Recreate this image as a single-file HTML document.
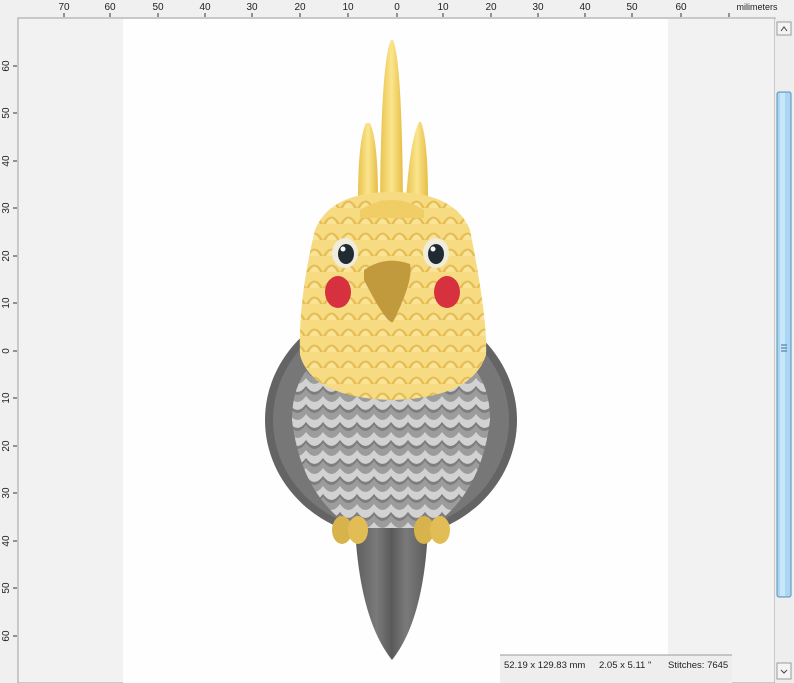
<!DOCTYPE html>
<html><head><meta charset="utf-8"><style>
html,body{margin:0;padding:0;background:#f0f0f0;}
svg{display:block;font-family:"Liberation Sans",sans-serif;}
</style></head><body>
<svg width="794" height="683" viewBox="0 0 794 683" xmlns="http://www.w3.org/2000/svg">
<defs>
<pattern id="ys" width="17" height="16" patternUnits="userSpaceOnUse">
<rect width="17" height="16" fill="#f6db83"/>
<path d="M0 16 Q8.5 1 17 16 Z" fill="#e6bd52"/>
<path d="M3 16 Q8.5 5 14 16 Z" fill="#f9e396"/>
</pattern>
<pattern id="gs" width="17" height="18" patternUnits="userSpaceOnUse">
<rect width="17" height="18" fill="#9c9c9c"/>
<path d="M0 0 Q8.5 12 17 0 L17 8 Q8.5 20 0 8 Z" fill="#d2d2d2"/>
<path d="M0 8 Q8.5 20 17 8 L17 11 Q8.5 23 0 11Z" fill="#7e7e7e"/>
</pattern>
<linearGradient id="sp" x1="0" x2="1"><stop offset="0" stop-color="#e9c24e"/><stop offset=".5" stop-color="#fbe58d"/><stop offset="1" stop-color="#e6bd45"/></linearGradient>
<linearGradient id="tl" x1="0" x2="1"><stop offset="0" stop-color="#5e5e5e"/><stop offset=".3" stop-color="#7a7a7a"/><stop offset=".5" stop-color="#5a5a5a"/><stop offset=".7" stop-color="#7a7a7a"/><stop offset="1" stop-color="#5c5c5c"/></linearGradient>
</defs>
<rect width="794" height="683" fill="#f0f0f0"/>
<rect x="18" y="18" width="757" height="665" fill="#f2f2f2" stroke="#a0a0a0"/>
<rect x="123" y="19" width="545" height="664" fill="#fefefe"/>
<g font-size="10" fill="#222" text-anchor="middle">
<text x="64" y="10">70</text><text x="110" y="10">60</text><text x="158" y="10">50</text><text x="205" y="10">40</text><text x="252" y="10">30</text><text x="300" y="10">20</text><text x="348" y="10">10</text><text x="397" y="10">0</text><text x="443" y="10">10</text><text x="491" y="10">20</text><text x="538" y="10">30</text><text x="585" y="10">40</text><text x="632" y="10">50</text><text x="681" y="10">60</text><text x="757" y="10" font-size="9">milimeters</text>
</g>
<g stroke="#333"><path d="M64 13v4M110 13v4M158 13v4M205 13v4M252 13v4M300 13v4M348 13v4M397 13v4M443 13v4M491 13v4M538 13v4M585 13v4M632 13v4M681 13v4M729 13v4"/>
<path d="M13 66h4M13 113h4M13 161h4M13 208h4M13 256h4M13 303h4M13 351h4M13 398h4M13 446h4M13 493h4M13 541h4M13 588h4M13 636h4"/></g>
<g font-size="10" fill="#222" text-anchor="middle">
<text transform="translate(9,66) rotate(-90)">60</text><text transform="translate(9,113) rotate(-90)">50</text><text transform="translate(9,161) rotate(-90)">40</text><text transform="translate(9,208) rotate(-90)">30</text><text transform="translate(9,256) rotate(-90)">20</text><text transform="translate(9,303) rotate(-90)">10</text><text transform="translate(9,351) rotate(-90)">0</text><text transform="translate(9,398) rotate(-90)">10</text><text transform="translate(9,446) rotate(-90)">20</text><text transform="translate(9,493) rotate(-90)">30</text><text transform="translate(9,541) rotate(-90)">40</text><text transform="translate(9,588) rotate(-90)">50</text><text transform="translate(9,636) rotate(-90)">60</text>
</g>
<rect x="775" y="19" width="18" height="664" fill="#eeeeee"/>
<rect x="777" y="22" width="14" height="13" fill="#f4f4f4" stroke="#9a9a9a"/>
<path d="M781 31l3-4 3 4" fill="none" stroke="#444"/>
<rect x="777" y="92" width="14" height="505" rx="2" fill="#a9d6f3" stroke="#5c8fb5"/>
<rect x="780" y="93" width="5" height="503" fill="#c9e7fa"/>
<path d="M781 345h6M781 348h6M781 351h6" stroke="#3b6c96"/>
<rect x="777" y="663" width="14" height="16" fill="#f4f4f4" stroke="#9a9a9a"/>
<path d="M781 670l3 3 3-3" fill="none" stroke="#444"/>
<rect x="500" y="655" width="232" height="28" fill="#eeeeee"/>
<line x1="500" y1="655" x2="732" y2="655" stroke="#999"/>
<g font-size="9.5" fill="#222"><text x="504" y="668">52.19 x 129.83 mm</text><text x="599" y="668">2.05 x 5.11 "</text><text x="668" y="668">Stitches: 7645</text></g>
<path d="M366 123 Q358 140 358 200 L378 200 Q378 140 370 123Z" fill="url(#sp)"/>
<path d="M419 122 Q410 140 406 200 L428 200 Q428 140 421 122Z" fill="url(#sp)"/>
<path d="M391 40 Q381 60 380 205 L403 205 Q402 60 393 40Z" fill="url(#sp)"/>
<ellipse cx="391" cy="420" rx="126" ry="118" fill="#646464"/>
<ellipse cx="391" cy="420" rx="118" ry="111" fill="#777"/>
<path d="M292 420 Q292 340 391 338 Q490 340 490 420 Q478 520 391 545 Q304 520 292 420Z" fill="url(#gs)"/>
<path d="M355 528 L428 528 Q424 620 392 660 Q360 620 355 528Z" fill="url(#tl)"/>
<path d="M315 230 Q330 192 392 192 Q455 192 470 230 Q488 320 486 355 Q472 398 392 400 Q312 398 300 355 Q298 300 315 230Z" fill="url(#ys)"/>
<path d="M360 210 Q392 190 424 210 L424 218 L360 218Z" fill="#f1cd66"/>
<ellipse cx="345" cy="253" rx="13" ry="15" fill="#f0ecdc"/><ellipse cx="346" cy="254" rx="8" ry="10" fill="#1f2a33"/><circle cx="343" cy="249" r="2.5" fill="#fff"/>
<ellipse cx="436" cy="253" rx="13" ry="15" fill="#f0ecdc"/><ellipse cx="436" cy="254" rx="8" ry="10" fill="#1f2a33"/><circle cx="433" cy="249" r="2.5" fill="#fff"/>
<ellipse cx="338" cy="292" rx="13" ry="16" fill="#d7313f"/>
<ellipse cx="447" cy="292" rx="13" ry="16" fill="#d7313f"/>
<path d="M364 270 Q385 255 410 264 Q414 280 393 322 Q387 325 364 280Z" fill="#c19a3e"/>
<ellipse cx="342" cy="530" rx="10" ry="14" fill="#d8b24b"/><ellipse cx="358" cy="530" rx="10" ry="14" fill="#e2bd55"/>
<ellipse cx="424" cy="530" rx="10" ry="14" fill="#d8b24b"/><ellipse cx="440" cy="530" rx="10" ry="14" fill="#e2bd55"/>
</svg>
</body></html>
